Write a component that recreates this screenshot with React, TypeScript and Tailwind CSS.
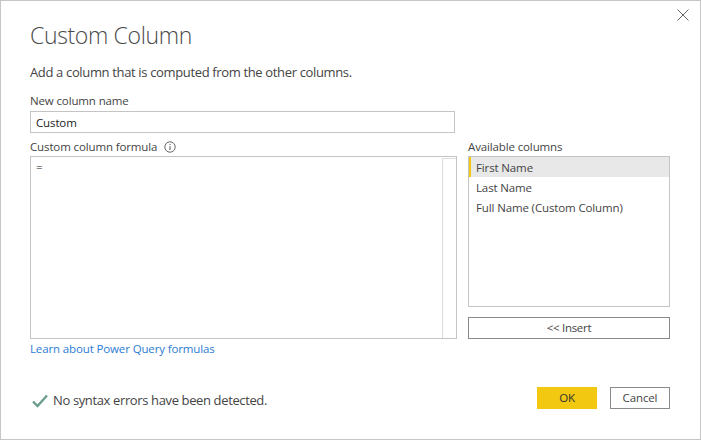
import React from "react";

export default function App() {
  return (
    <div className="relative w-[701px] h-[440px] bg-white border border-[#c6c6c6] pl-[29px] pr-[30px] pt-[19px] text-[#444] [font-family:'Open_Sans',sans-serif] text-[11.5px] tracking-[-0.13px] leading-[16px] flex flex-col overflow-hidden">
      <button className="absolute right-[11px] top-[8px] w-[12px] h-[12px]">
        <svg viewBox="0 0 12 12" className="w-[12px] h-[12px]" fill="none" stroke="#666" strokeWidth="1">
          <path d="M0.5 0.5 L11.5 11.5 M11.5 0.5 L0.5 11.5" />
        </svg>
      </button>
      <h1 className="text-[23px] leading-[30px] font-light text-[#4a4a4a] tracking-[-0.35px]">Custom Column</h1>
      <p className="mt-[13px] text-[13px] leading-[18px] tracking-[-0.35px]">Add a column that is computed from the other columns.</p>
      <label className="mt-[12px] leading-[16px]">New column name</label>
      <div className="mt-[2px] w-[425px] h-[22px] border border-[#c4c4c4] px-[5px] pt-[1px] flex items-center text-[#222]">Custom</div>
      <div className="mt-[3px] flex gap-[11px]">
        <div className="flex flex-col w-[427px]">
          <div className="flex items-center gap-[7px] h-[20px] pt-[1px]">
            <span>Custom column formula</span>
            <svg viewBox="0 0 12 12" className="w-[12px] h-[12px]" fill="none" stroke="#555">
              <circle cx="6" cy="6" r="5.2" strokeWidth="0.9" />
              <path d="M6 5.2V9M6 3V4" strokeWidth="1" />
            </svg>
          </div>
          <div className="h-[183px] border border-[#c4c4c4] flex">
            <div className="flex-1 px-[5px] pt-[2px] text-[#222]">=</div>
            <div className="w-[14px] mt-[1px] border-l border-t border-[#dcdcdc]" />
          </div>
          <a className="mt-[2px] text-[#2b7cd3]">Learn about Power Query formulas</a>
        </div>
        <div className="flex flex-col w-[202px]">
          <div className="h-[20px] pt-[1px] flex items-center">Available columns</div>
          <div className="h-[151px] border border-[#c4c4c4] text-[#444]">
            <div className="h-[20px] pt-[1px] bg-[#e8e8e8] border-l-[2px] border-[#f2c811] pl-[5px] flex items-center">First Name</div>
            <div className="h-[20px] pt-[1px] pl-[7px] flex items-center">Last Name</div>
            <div className="h-[20px] pt-[1px] pl-[7px] flex items-center">Full Name (Custom Column)</div>
          </div>
          <button className="mt-[10px] h-[22px] border border-[#8a8a8a] flex items-center justify-center tracking-[-0.3px]">&lt;&lt; Insert</button>
        </div>
      </div>
      <div className="mt-[32px] flex items-center">
        <svg viewBox="0 0 16 14" className="ml-[2px] mt-[3px] w-[16px] h-[14px]" fill="none" stroke="#6a9e8e" strokeWidth="2.4">
          <path d="M1 7.5 L5.5 12 L15 1.5" />
        </svg>
        <span className="ml-[5px] pt-[2px] text-[13px] tracking-[-0.37px]">No syntax errors have been detected.</span>
        <button className="ml-auto w-[60px] h-[22px] -mt-[2px] bg-[#f2c811] text-[#333] flex items-center justify-center">OK</button>
        <button className="ml-[13px] w-[60px] h-[22px] -mt-[2px] border border-[#8a8a8a] flex items-center justify-center">Cancel</button>
      </div>
    </div>
  );
}
